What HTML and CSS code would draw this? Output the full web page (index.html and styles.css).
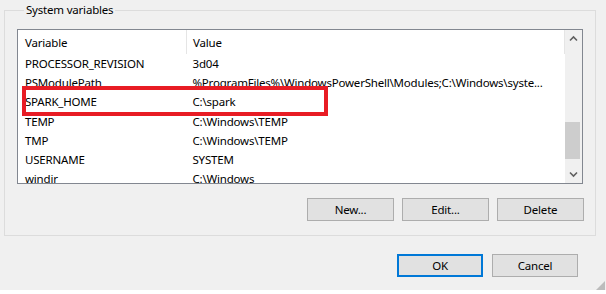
FILE: index.html
```html
<!DOCTYPE html>
<html lang="en">
<head>
    <meta charset="UTF-8">
    <meta name="viewport" content="width=device-width, initial-scale=1.0">
    <title>Environment Variables</title>
    <link rel="stylesheet" href="styles.css">
</head>
<body>
    <div class="dialog">
        <fieldset class="group">
            <legend>System variables</legend>

            <div class="listbox">
                <div class="list-area">
                    <table class="vars">
                        <thead>
                            <tr>
                                <th class="col-name">Variable</th>
                                <th class="col-value">Value</th>
                            </tr>
                        </thead>
                        <tbody>
                            <tr><td>PROCESSOR_REVISION</td><td>3d04</td></tr>
                            <tr><td>PSModulePath</td><td>%ProgramFiles%\WindowsPowerShell\Modules;C:\Windows\syste...</td></tr>
                            <tr><td>SPARK_HOME</td><td>C:\spark</td></tr>
                            <tr><td>TEMP</td><td>C:\Windows\TEMP</td></tr>
                            <tr><td>TMP</td><td>C:\Windows\TEMP</td></tr>
                            <tr><td>USERNAME</td><td>SYSTEM</td></tr>
                            <tr><td>windir</td><td>C:\Windows</td></tr>
                        </tbody>
                    </table>
                </div>
                <div class="scrollbar">
                    <svg class="arrow" width="17" height="17" viewBox="0 0 17 17">
                        <polyline points="5,10.5 8.5,7 12,10.5" fill="none" stroke="#606060" stroke-width="1.6"/>
                    </svg>
                    <div class="track">
                        <div class="thumb"></div>
                    </div>
                    <svg class="arrow" width="17" height="17" viewBox="0 0 17 17">
                        <polyline points="5,6.5 8.5,10 12,6.5" fill="none" stroke="#606060" stroke-width="1.6"/>
                    </svg>
                </div>
                <div class="highlight"></div>
            </div>

            <div class="buttons">
                <button>New...</button>
                <button>Edit...</button>
                <button>Delete</button>
            </div>
        </fieldset>

        <div class="buttons footer">
            <button class="default">OK</button>
            <button>Cancel</button>
        </div>

        <div class="grip"></div>
    </div>
    <div class="bottom-edge"></div>
</body>
</html>
```

FILE: styles.css
```css
body {
    margin: 0;
    background: #f0f0f0;
    font-family: "Noto Sans", "Liberation Sans", sans-serif;
    font-size: 11.5px;
    letter-spacing: -0.2px;
    color: #000;
}
.dialog {
    position: relative;
    height: 290px;
    padding-top: 2px;
    box-sizing: border-box;
}
.group {
    margin: 0 10px 0 4px;
    padding: 11px 12px 14px 12px;
    border: 1px solid #dcdcdc;
    min-width: 0;
}
.group legend {
    margin-left: 7px;
    padding: 0 2px;
    line-height: 16px;
}
.listbox {
    position: relative;
    display: flex;
    height: 155px;
    border: 1px solid #828790;
    background: #fff;
    box-sizing: border-box;
}
.list-area {
    flex: 1;
    overflow: hidden;
}
.vars {
    border-collapse: collapse;
    table-layout: fixed;
    width: 100%;
}
.vars th {
    height: 24px;
    padding: 0 0 0 7px;
    font-weight: normal;
    text-align: left;
    border-right: 1px solid #e5e5e5;
}
.vars th.col-name {
    width: 161px;
}
.vars th.col-value {
    padding-left: 6px;
}
.vars td {
    height: 19.2px;
    padding: 0 0 0 7px;
    white-space: nowrap;
    overflow: hidden;
}
.vars td + td {
    padding-left: 6px;
}
.scrollbar {
    width: 17px;
    display: flex;
    flex-direction: column;
    background: #f0f0f0;
}
.arrow {
    display: block;
}
.track {
    flex: 1;
    position: relative;
}
.thumb {
    position: absolute;
    top: 75px;
    left: 0;
    width: 15px;
    height: 37px;
    background: #cdcdcd;
}
.highlight {
    position: absolute;
    left: 4px;
    top: 56px;
    width: 306px;
    height: 30px;
    border: 4px solid #e81c24;
    box-sizing: border-box;
}
.buttons {
    display: flex;
    justify-content: flex-end;
    gap: 8px;
    margin-top: 14px;
    margin-right: -1px;
}
.buttons button {
    width: 87px;
    height: 23px;
    padding: 0;
    background: #e1e1e1;
    border: 1px solid #adadad;
    font-family: inherit;
    font-size: 11.5px;
    letter-spacing: -0.2px;
    color: #000;
}
.footer {
    margin-top: 18px;
    margin-right: 28px;
    gap: 9px;
}
.footer button {
    width: 86px;
}
.footer button.default {
    border: 2px solid #0078d7;
}
.grip {
    position: absolute;
    right: 1px;
    bottom: 0;
    width: 9px;
    height: 9px;
    background:
        radial-gradient(circle, #bcbcbc 1.5px, transparent 1.6px) 0 0 / 3px 3px;
    clip-path: polygon(100% 0, 100% 100%, 0 100%);
}
.bottom-edge {
    height: 4px;
    background: #fff;
}
```
